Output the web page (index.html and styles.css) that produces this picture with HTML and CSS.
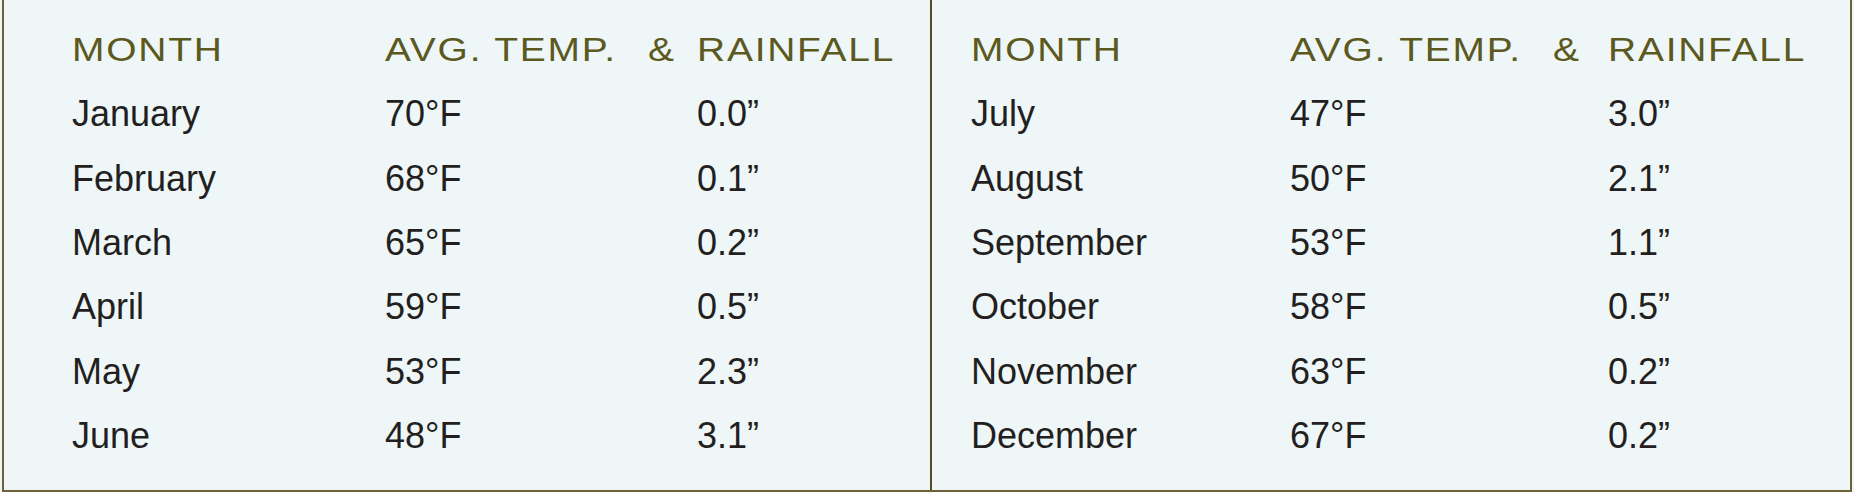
FILE: index.html
```html
<!DOCTYPE html>
<html lang="en">
<head>
<meta charset="utf-8">
<title>Climate</title>
<link rel="stylesheet" href="styles.css">
</head>
<body>
<div class="climate">
  <div class="panel panel-left">
    <div class="hd"><span>MONTH</span></div>
    <div class="hd hd-temp"><span>AVG. TEMP.</span><span>&amp;</span></div>
    <div class="hd"><span>RAINFALL</span></div>
    <div>January</div><div>70°F</div><div>0.0”</div>
    <div>February</div><div>68°F</div><div>0.1”</div>
    <div>March</div><div>65°F</div><div>0.2”</div>
    <div>April</div><div>59°F</div><div>0.5”</div>
    <div>May</div><div>53°F</div><div>2.3”</div>
    <div>June</div><div>48°F</div><div>3.1”</div>
  </div>
  <div class="panel panel-right">
    <div class="hd"><span>MONTH</span></div>
    <div class="hd hd-temp"><span>AVG. TEMP.</span><span>&amp;</span></div>
    <div class="hd"><span>RAINFALL</span></div>
    <div>July</div><div>47°F</div><div>3.0”</div>
    <div>August</div><div>50°F</div><div>2.1”</div>
    <div>September</div><div>53°F</div><div>1.1”</div>
    <div>October</div><div>58°F</div><div>0.5”</div>
    <div>November</div><div>63°F</div><div>0.2”</div>
    <div>December</div><div>67°F</div><div>0.2”</div>
  </div>
</div>
</body>
</html>
```
FILE: styles.css
```css
html {
  background: #eef6f8;
}
body {
  margin: 0;
  background: #eef6f8;
  font-family: "Liberation Sans", Arial, sans-serif;
  color: #231f20;
}
.climate {
  display: flex;
  width: 1846px;
  height: 490px;
  margin-left: 2px;
  border-left: 2px solid #6e6236;
  border-right: 2px solid #6e6236;
  border-bottom: 2px solid #6e6236;
  background: #eef6f8;
}
.panel {
  display: grid;
  grid-template-rows: 52.3px repeat(6, 64.4px);
  align-content: start;
  padding-top: 30px;
  font-size: 36px;
  line-height: 64.4px;
}
.panel-left {
  width: 858px;
  padding-left: 68px;
  grid-template-columns: 313px 312px 1fr;
  border-right: 2px solid #5a4a1f;
}
.panel-right {
  flex: 1;
  padding-left: 39px;
  grid-template-columns: 319px 318px 1fr;
}
.hd {
  font-size: 33px;
  line-height: 40px;
  letter-spacing: 1.5px;
  color: #5c5920;
  align-self: start;
  white-space: nowrap;
}
.hd span {
  display: inline-block;
  transform: scaleX(1.18);
  transform-origin: 0 50%;
}
.hd-temp {
  display: grid;
  grid-template-columns: 263px auto;
}
```
